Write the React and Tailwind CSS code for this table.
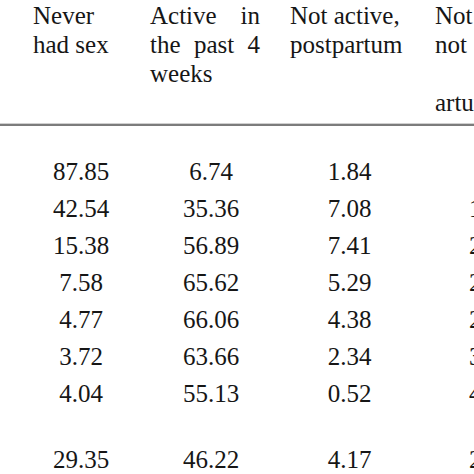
import React from "react";

const rows = [
  ["87.85", "6.74", "1.84", "3.57"],
  ["42.54", "35.36", "7.08", "14.02"],
  ["15.38", "56.89", "7.41", "20.32"],
  ["7.58", "65.62", "5.29", "21.51"],
  ["4.77", "66.06", "4.38", "28.79"],
  ["3.72", "63.66", "2.34", "30.28"],
  ["4.04", "55.13", "0.52", "40.31"],
  null,
  ["29.35", "46.22", "4.17", "20.26"],
];

function Row({ r }) {
  if (!r) return <div className="h-[29px]" />;
  return (
    <div className="flex h-[37px] leading-[37px]">
      <div className="w-[120px] shrink-0 ml-[21px] text-center">{r[0]}</div>
      <div className="w-[140px] shrink-0 text-center">{r[1]}</div>
      <div className="w-[137px] shrink-0 text-center">{r[2]}</div>
      <div className="w-[158px] shrink-0 text-center">{r[3]}</div>
    </div>
  );
}

export default function App() {
  return (
    <div className="w-[474px] h-[474px] overflow-hidden bg-white text-[#161616] text-[25px] font-['Liberation_Serif','DejaVu_Serif',serif]">
      <div className="flex pt-[1px] pl-[33px] leading-[29px] whitespace-nowrap">
        <div className="w-[117px] shrink-0">
          <div>Never</div>
          <div>had sex</div>
        </div>
        <div className="w-[110px] shrink-0">
          <div className="flex justify-between">
            <span>Active</span>
            <span>in</span>
          </div>
          <div className="flex justify-between">
            <span>the</span>
            <span>past</span>
            <span>4</span>
          </div>
          <div>weeks</div>
        </div>
        <div className="w-[145px] shrink-0 ml-[30px]">
          <div>Not active,</div>
          <div>postpartum</div>
        </div>
        <div className="shrink-0">
          <div>Not active,</div>
          <div>not</div>
          <div className="h-[29px]" />
          <div>artum</div>
        </div>
      </div>
      <div className="mt-[6px] border-t border-[#d0d0d0]" />
      <div className="h-[2px] bg-[#7c7c7c]" />
      <div className="mt-[27px] whitespace-nowrap">
        {rows.map((r, i) => (
          <Row key={i} r={r} />
        ))}
      </div>
    </div>
  );
}
